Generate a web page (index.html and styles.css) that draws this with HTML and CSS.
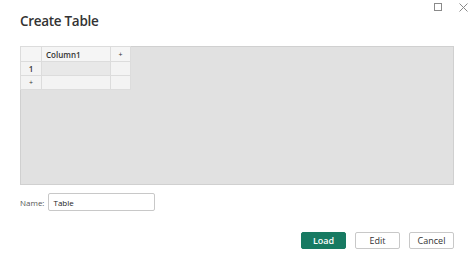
FILE: index.html
```html
<html>
<head>
    <title>Create Table</title>
    <link rel="stylesheet" href="styles.css">
</head>
<body>
    <div class="dialog">
        <div class="window-controls">
            <span class="ctl">
                <svg width="9" height="9" viewBox="0 0 9 9"><rect x="0.5" y="0.5" width="7" height="7" fill="none" stroke="#8a8a8a" stroke-width="1"/></svg>
            </span>
            <span class="ctl">
                <svg width="9" height="9" viewBox="0 0 9 9"><path d="M0.5 0.5 L8.5 8.5 M8.5 0.5 L0.5 8.5" stroke="#8a8a8a" stroke-width="1"/></svg>
            </span>
        </div>
        <h1>Create Table</h1>
        <div class="grid-area">
            <table class="grid">
                <tr class="head">
                    <th class="corner"></th>
                    <th class="col">Column1</th>
                    <th class="add">+</th>
                </tr>
                <tr>
                    <td class="rownum">1</td>
                    <td class="cell"></td>
                    <td class="blank"></td>
                </tr>
                <tr>
                    <td class="rownum plus">+</td>
                    <td class="blank"></td>
                    <td class="blank"></td>
                </tr>
            </table>
        </div>
        <div class="name-row">
            <label for="tableName">Name:</label>
            <input id="tableName" type="text" value="Table">
        </div>
        <div class="actions">
            <button class="primary">Load</button>
            <button>Edit</button>
            <button>Cancel</button>
        </div>
    </div>
</body>
</html>
```

FILE: styles.css
```css
body {
    margin: 0;
    background: #fff;
    font-family: "Open Sans", "Noto Sans", sans-serif;
    color: #333;
}
.dialog {
    position: relative;
    width: 474px;
    height: 266px;
    padding: 0 20px;
    box-sizing: border-box;
}
.window-controls {
    position: absolute;
    top: 3px;
    right: 6px;
    display: flex;
    gap: 16px;
}
.ctl {
    display: flex;
    width: 9px;
    height: 9px;
}
h1 {
    margin: 0;
    padding-top: 12px;
    height: 46px;
    box-sizing: border-box;
    font-size: 13.5px;
    font-weight: 600;
    color: #333;
    letter-spacing: -0.3px;
}
.grid-area {
    height: 139px;
    background: #e1e1e1;
    border: 1px solid #d0d0d0;
    box-sizing: border-box;
}
.grid {
    border-collapse: collapse;
    font-size: 8px;
    margin: -1px 0 0 -1px;
}
.grid tr {
    height: 14px;
}
.grid tr.head {
    height: 15px;
}
.grid th, .grid td {
    border: 1px solid #dcdcdc;
    padding: 0 4px;
    text-align: left;
    background: #f3f3f3;
}
.grid th {
    font-weight: 600;
    background: #f5f5f5;
}
.corner { width: 12px; }
.col { width: 60px; }
.add {
    width: 11px;
    text-align: center !important;
    font-weight: 400 !important;
    font-size: 7px;
}
.rownum {
    font-weight: 600;
    text-align: center !important;
}
.plus {
    font-weight: 400;
    font-size: 7px;
}
.grid td.cell {
    background: #e8e8e8;
}
.name-row {
    display: flex;
    align-items: center;
    gap: 4px;
    margin-top: 8px;
    font-size: 8px;
    color: #555;
}
.name-row input {
    width: 107px;
    height: 18px;
    box-sizing: border-box;
    border: 1px solid #c8c8c8;
    border-radius: 2px;
    padding: 0 4px;
    font-family: inherit;
    font-size: 8px;
    color: #222;
    outline: none;
}
.actions {
    display: flex;
    justify-content: flex-end;
    gap: 9px;
    margin-top: 21px;
}
.actions button {
    width: 45px;
    height: 17px;
    border: 1px solid #c8c8c8;
    border-radius: 2px;
    background: #fff;
    color: #333;
    font-family: inherit;
    font-size: 9px;
    padding: 0;
}
.actions button.primary {
    background: #177a62;
    border-color: #177a62;
    color: #fff;
    font-weight: 600;
}
```
